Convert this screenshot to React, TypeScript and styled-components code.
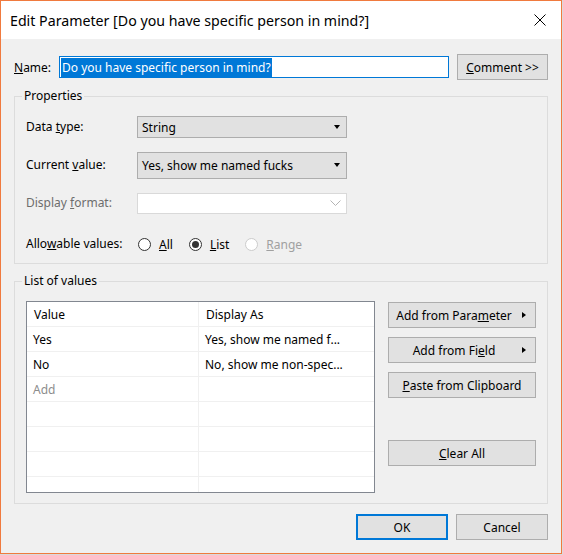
import styled, { createGlobalStyle } from 'styled-components';

const GlobalStyle = createGlobalStyle`
  body {
    margin: 0;
    background: #dadada;
    font-family: "Noto Sans", "Open Sans", sans-serif;
    font-size: 12px;
    color: #000;
  }
`;

const Window = styled.div`
  box-sizing: border-box;
  width: 562px;
  height: 554px;
  border: 1px solid #f07a3e;
  background: #f0f0f0;
  display: flex;
  flex-direction: column;
`;

const TitleBar = styled.div`
  height: 38px;
  background: #fff;
  display: flex;
  align-items: center;
  justify-content: space-between;
  padding: 0 15px 0 9px;
  font-size: 14.2px;
`;

const Body = styled.div`
  padding: 15px 13px 0 13px;
  display: flex;
  flex-direction: column;
`;

const NameRow = styled.div`
  height: 26px;
  display: flex;
  align-items: center;
`;

const NameLabel = styled.label`
  width: 45px;
`;

const NameInput = styled.div`
  box-sizing: border-box;
  width: 390px;
  height: 22px;
  border: 1px solid #0078d7;
  background: #fff;
  padding: 1px 0 0 1px;
  margin-right: 8px;
  & span {
    display: inline-block;
    height: 19px;
    line-height: 19px;
    background: #0078d7;
    color: #fff;
    padding: 0 1px;
  }
`;

const Key = styled.span`
  text-decoration: underline;
`;

const Button = styled.button<{ $w?: number; $default?: boolean; $menu?: boolean }>`
  position: relative;
  box-sizing: border-box;
  width: ${p => (p.$w ? `${p.$w}px` : '100%')};
  height: 26px;
  background: #e1e1e1;
  border: ${p => (p.$default ? '2px solid #0078d7' : '1px solid #adadad')};
  font-family: inherit;
  font-size: 12px;
  color: #000;
  padding: 0 ${p => (p.$menu ? '16px' : '0')} 0 0;
  text-align: center;
  &::after {
    content: '';
    display: ${p => (p.$menu ? 'block' : 'none')};
    position: absolute;
    right: 9px;
    top: 9px;
    border-top: 3.5px solid transparent;
    border-bottom: 3.5px solid transparent;
    border-left: 4px solid #000;
  }
`;

const Group = styled.fieldset`
  margin: 0;
  border: 1px solid #dcdcdc;
  padding: 4px 11px 11px 11px;
  min-width: 0;
`;

const Legend = styled.legend`
  margin-left: -4px;
  padding: 0 2px;
  line-height: 16px;
`;

const PropGrid = styled.div`
  display: grid;
  grid-template-columns: 111px 210px;
  grid-template-rows: 38px 38px 38px 30px;
  align-items: center;
  & > :nth-last-child(-n + 2) {
    align-self: end;
  }
`;

const FieldLabel = styled.span<{ $disabled?: boolean }>`
  color: ${p => (p.$disabled ? '#6d6d6d' : '#000')};
  line-height: 16px;
`;

const Select = styled.div<{ $h: number; $disabled?: boolean }>`
  position: relative;
  box-sizing: border-box;
  height: ${p => p.$h}px;
  background: ${p => (p.$disabled ? '#fff' : '#e1e1e1')};
  border: 1px solid ${p => (p.$disabled ? '#d9d9d9' : '#adadad')};
  padding-left: 4px;
  display: flex;
  align-items: center;
  &::after {
    content: '';
    display: ${p => (p.$disabled ? 'none' : 'block')};
    position: absolute;
    right: 6px;
    top: 50%;
    margin-top: -2px;
    border-left: 3.5px solid transparent;
    border-right: 3.5px solid transparent;
    border-top: 4px solid #000;
  }
`;

const Chevron = styled.svg`
  position: absolute;
  right: 5px;
  top: 50%;
  margin-top: -3px;
`;

const Radios = styled.div`
  display: flex;
  align-items: center;
  gap: 16px;
  height: 16px;
  padding-left: 1px;
`;

const RadioOption = styled.label<{ $disabled?: boolean }>`
  display: flex;
  align-items: center;
  gap: 8px;
  color: ${p => (p.$disabled ? '#a0a0a0' : '#000')};
`;

const RadioCircle = styled.span<{ $checked?: boolean; $disabled?: boolean }>`
  box-sizing: border-box;
  width: 13px;
  height: 13px;
  border-radius: 50%;
  border: 1px solid ${p => (p.$disabled ? '#cccccc' : '#333')};
  background: #fff;
  display: flex;
  align-items: center;
  justify-content: center;
  &::after {
    content: '';
    display: ${p => (p.$checked ? 'block' : 'none')};
    width: 7px;
    height: 7px;
    border-radius: 50%;
    background: #333;
  }
`;

const ListGroup = styled(Group)`
  margin-top: 9px;
  padding: 12px 11px 10px 11px;
`;

const ListBody = styled.div`
  display: flex;
  gap: 13px;
`;

const Table = styled.div`
  box-sizing: border-box;
  width: 349px;
  height: 192px;
  border: 1px solid #828790;
  background: #fff;
  overflow: hidden;
  display: grid;
  grid-template-columns: 172px 1fr;
  grid-auto-rows: 25px;
`;

const Cell = styled.div<{ $muted?: boolean; $pad?: number }>`
  box-sizing: border-box;
  border-bottom: 1px solid #f0f0f0;
  padding-left: ${p => p.$pad ?? 6}px;
  display: flex;
  align-items: center;
  color: ${p => (p.$muted ? '#8d8d8d' : '#000')};
  white-space: nowrap;
  &:nth-child(odd) {
    border-right: 1px solid #f0f0f0;
  }
`;

const SideButtons = styled.div`
  width: 148px;
  padding-top: 1px;
  display: flex;
  flex-direction: column;
  gap: 9px;
  & > :last-child {
    margin-top: 33px;
  }
`;

const Footer = styled.div`
  margin-top: 10px;
  display: flex;
  justify-content: flex-end;
  gap: 8px;
`;

const rows = [
  ['Yes', 'Yes, show me named f...'],
  ['No', 'No, show me non-spec...'],
  ['Add', ''],
  ['', ''],
  ['', ''],
  ['', ''],
  ['', ''],
];

export default function App() {
  return (
    <>
      <GlobalStyle />
      <Window>
        <TitleBar>
          <span>Edit Parameter [Do you have specific person in mind?]</span>
          <svg width="12" height="12" viewBox="0 0 12 12">
            <path d="M0.5 0.5 L11.5 11.5 M11.5 0.5 L0.5 11.5" stroke="#000" strokeWidth="1" fill="none" />
          </svg>
        </TitleBar>
        <Body>
          <NameRow>
            <NameLabel><Key>N</Key>ame:</NameLabel>
            <NameInput><span>Do you have specific person in mind?</span></NameInput>
            <Button $w={91}><Key>C</Key>omment &gt;&gt;</Button>
          </NameRow>

          <Group style={{ marginTop: 8 }}>
            <Legend>Properties</Legend>
            <PropGrid>
              <FieldLabel>Data <Key>t</Key>ype:</FieldLabel>
              <Select $h={22}>String</Select>
              <FieldLabel>Current <Key>v</Key>alue:</FieldLabel>
              <Select $h={27}>Yes, show me named fucks</Select>
              <FieldLabel $disabled>Display <Key>f</Key>ormat:</FieldLabel>
              <Select $h={21} $disabled>
                <Chevron width="11" height="6" viewBox="0 0 11 6">
                  <path d="M0.5 0.5 L5.5 5.5 L10.5 0.5" stroke="#b4b4b4" fill="none" />
                </Chevron>
              </Select>
              <FieldLabel>Allo<Key>w</Key>able values:</FieldLabel>
              <Radios>
                <RadioOption><RadioCircle /><span><Key>A</Key>ll</span></RadioOption>
                <RadioOption><RadioCircle $checked /><span><Key>L</Key>ist</span></RadioOption>
                <RadioOption $disabled><RadioCircle $disabled /><span><Key>R</Key>ange</span></RadioOption>
              </Radios>
            </PropGrid>
          </Group>

          <ListGroup>
            <Legend>List of values</Legend>
            <ListBody>
              <Table>
                <Cell $pad={7}>Value</Cell>
                <Cell $pad={7}>Display As</Cell>
                {rows.map(([v, d], i) => [
                  <Cell key={`v${i}`} $muted={v === 'Add'}>{v}</Cell>,
                  <Cell key={`d${i}`}>{d}</Cell>,
                ])}
              </Table>
              <SideButtons>
                <Button $menu>Add from Para<Key>m</Key>eter</Button>
                <Button $menu>Add from Fi<Key>e</Key>ld</Button>
                <Button><Key>P</Key>aste from Clipboard</Button>
                <Button><Key>C</Key>lear All</Button>
              </SideButtons>
            </ListBody>
          </ListGroup>

          <Footer>
            <Button $w={92} $default>OK</Button>
            <Button $w={92}>Cancel</Button>
          </Footer>
        </Body>
      </Window>
    </>
  );
}
